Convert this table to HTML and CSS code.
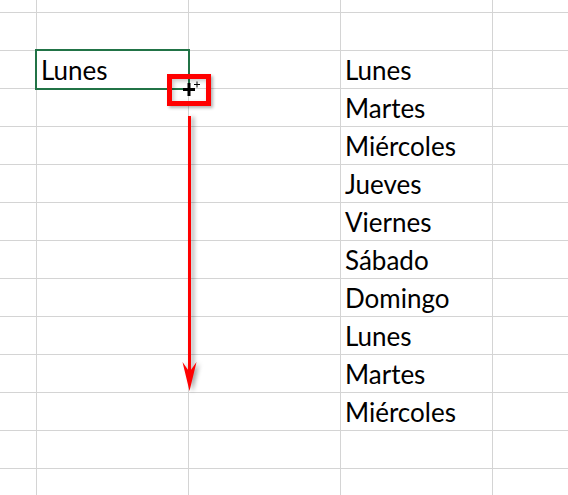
FILE: index.html
```html
<!DOCTYPE html>
<html lang="es">
<head>
<meta charset="utf-8">
<title>Autorrelleno</title>
<link rel="stylesheet" href="styles.css">
</head>
<body>
<div class="sheet">
  <div class="grid">
    <div class="c"></div><div class="c"></div><div class="c"></div><div class="c"></div><div class="c last"></div>
    <div class="c"></div><div class="c"></div><div class="c"></div><div class="c"></div><div class="c last"></div>
    <div class="c"></div><div class="c">Lunes</div><div class="c"></div><div class="c">Lunes</div><div class="c last"></div>
    <div class="c"></div><div class="c"></div><div class="c"></div><div class="c">Martes</div><div class="c last"></div>
    <div class="c"></div><div class="c"></div><div class="c"></div><div class="c">Miércoles</div><div class="c last"></div>
    <div class="c"></div><div class="c"></div><div class="c"></div><div class="c">Jueves</div><div class="c last"></div>
    <div class="c"></div><div class="c"></div><div class="c"></div><div class="c">Viernes</div><div class="c last"></div>
    <div class="c"></div><div class="c"></div><div class="c"></div><div class="c">Sábado</div><div class="c last"></div>
    <div class="c"></div><div class="c"></div><div class="c"></div><div class="c">Domingo</div><div class="c last"></div>
    <div class="c"></div><div class="c"></div><div class="c"></div><div class="c">Lunes</div><div class="c last"></div>
    <div class="c"></div><div class="c"></div><div class="c"></div><div class="c">Martes</div><div class="c last"></div>
    <div class="c"></div><div class="c"></div><div class="c"></div><div class="c">Miércoles</div><div class="c last"></div>
    <div class="c"></div><div class="c"></div><div class="c"></div><div class="c"></div><div class="c last"></div>
    <div class="c"></div><div class="c"></div><div class="c"></div><div class="c"></div><div class="c last"></div>
  </div>

  <div class="selection"></div>

  <svg class="arrow" width="30" height="290" viewBox="0 0 30 290" aria-hidden="true">
    <rect x="6" y="0" width="3" height="256" fill="#ff0000"/>
    <path d="M0.5 246 L7.5 256 L14.5 246 L7.5 275 Z" fill="#ff0000"/>
  </svg>

  <div class="handle-box"></div>

  <svg class="cursor" width="22" height="22" viewBox="0 0 22 22" aria-hidden="true">
    <rect x="1" y="7" width="12" height="3" fill="#000"/>
    <rect x="5.5" y="2" width="3" height="13" fill="#000"/>
    <rect x="12" y="3" width="6" height="1" fill="#000"/>
    <rect x="14.5" y="0.5" width="1" height="6" fill="#000"/>
  </svg>
</div>
</body>
</html>
```

FILE: styles.css
```css
html, body {
  margin: 0;
  padding: 0;
  background: #ffffff;
}

.sheet {
  position: relative;
  width: 568px;
  height: 495px;
  overflow: hidden;
  font-family: Lato, "Open Sans", sans-serif;
  font-size: 26px;
  color: #000;
}

.grid {
  display: grid;
  grid-template-columns: 37px 152px 152px 152px 75px;
  grid-template-rows: 13px repeat(12, 38px) 30px;
}

.c {
  box-sizing: border-box;
  border-right: 1px solid #d4d4d4;
  border-bottom: 1px solid #d4d4d4;
  display: flex;
  align-items: flex-end;
  padding: 0 0 6px 4px;
  line-height: 24px;
  white-space: nowrap;
}

.c.last {
  border-right: none;
}

.selection {
  position: absolute;
  left: 35px;
  top: 49px;
  width: 155px;
  height: 41px;
  box-sizing: border-box;
  border: 2px solid #217346;
}

.handle-box {
  position: absolute;
  left: 167px;
  top: 74px;
  width: 44px;
  height: 32px;
  box-sizing: border-box;
  border: 5px solid #ff0000;
  box-shadow: inset 2px 2px 4px rgba(0, 0, 0, 0.22), 2px 2px 3px rgba(0, 0, 0, 0.3);
}

.arrow {
  position: absolute;
  left: 182px;
  top: 116px;
  filter: drop-shadow(3px 1px 2px rgba(0, 0, 0, 0.35));
}

.cursor {
  position: absolute;
  left: 182px;
  top: 81px;
}
```
